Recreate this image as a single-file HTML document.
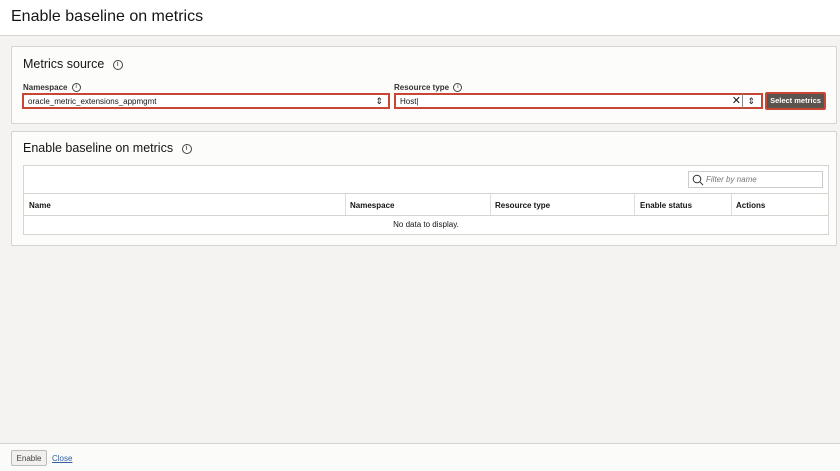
<!DOCTYPE html>
<html><head><style>
*{box-sizing:border-box;margin:0;padding:0}
body{width:840px;height:471px;background:#f4f3f1;font-family:"Liberation Sans",sans-serif;color:#161513;position:relative;overflow:hidden}
.a{position:absolute}
.hdr{left:0;top:0;width:840px;height:36px;background:#fff;border-bottom:1px solid #d6d4d1}
.panel{background:#fcfcfb;border:1px solid #d6d4d1;border-radius:2px}
.info{display:inline-block;width:10px;height:10px;border:1px solid #444;border-radius:50%;font-size:7px;line-height:8px;text-align:center;vertical-align:middle}
.lbl{font-size:8px;font-weight:bold;color:#333}
.inp{background:#fff;border:2px solid #c74634;height:16px;font-size:8px;padding-left:4px;line-height:13px}
.th{font-size:8px;font-weight:bold;top:201px}
.vl{width:1px;background:#ddd;top:194px;height:21px}
</style></head><body>
<div class="a hdr"><div class="a" style="left:11px;top:8px;font-size:16px">Enable baseline on metrics</div></div>

<div class="a panel" style="left:11px;top:46px;width:826px;height:78px"></div>
<div class="a" style="left:23px;top:57px;font-size:12.5px">Metrics source <span class="info" style="margin-left:5px">i</span></div>
<div class="a lbl" style="left:23px;top:83px">Namespace <span class="info" style="width:9px;height:9px;font-size:6px;line-height:7px;margin-left:2px;font-weight:normal">i</span></div>
<div class="a inp" style="left:22px;top:93px;width:368px">oracle_metric_extensions_appmgmt<span class="a" style="right:5px;top:0;font-size:9px">⇕</span></div>
<div class="a lbl" style="left:394px;top:83px">Resource type <span class="info" style="width:9px;height:9px;font-size:6px;line-height:7px;margin-left:2px;font-weight:normal">i</span></div>
<div class="a inp" style="left:394px;top:93px;width:369px">Host|<span class="a" style="right:20px;top:0;font-size:11px;line-height:12px">✕</span><span class="a" style="right:18px;top:-1px;width:1px;height:14px;background:#888"></span><span class="a" style="right:6px;top:0;font-size:9px">⇕</span></div>
<div class="a" style="left:765px;top:92px;width:61px;height:18px;background:#5b534d;border:2px solid #c74634;border-radius:2px;color:#fff;font-size:7.5px;font-weight:bold;text-align:center;line-height:14px">Select metrics</div>

<div class="a panel" style="left:11px;top:131px;width:826px;height:115px"></div>
<div class="a" style="left:23px;top:141px;font-size:12.5px">Enable baseline on metrics <span class="info" style="margin-left:5px">i</span></div>
<div class="a" style="left:23px;top:165px;width:806px;height:70px;border:1px solid #d6d4d1;background:#fff"></div>
<div class="a" style="left:688px;top:171px;width:135px;height:17px;border:1px solid #ccc;background:#fff;font-size:8px;font-style:italic;color:#777;padding-left:17px;line-height:15px">Filter by name
<svg class="a" style="left:3px;top:2px" width="12" height="12" viewBox="0 0 12 12"><circle cx="5" cy="5" r="3.8" fill="none" stroke="#333" stroke-width="1"/><path d="M8 8l3 3" stroke="#333"/></svg></div>
<div class="a" style="left:24px;top:193px;width:804px;height:1px;background:#d6d4d1"></div>
<div class="a" style="left:24px;top:215px;width:804px;height:1px;background:#d6d4d1"></div>
<div class="a vl" style="left:345px"></div><div class="a vl" style="left:490px"></div><div class="a vl" style="left:634px"></div><div class="a vl" style="left:731px"></div>
<div class="a th" style="left:29px">Name</div><div class="a th" style="left:350px">Namespace</div><div class="a th" style="left:495px">Resource type</div><div class="a th" style="left:640px">Enable status</div><div class="a th" style="left:736px">Actions</div>
<div class="a" style="left:24px;top:220px;width:804px;text-align:center;font-size:8px">No data to display.</div>

<div class="a" style="left:0;top:443px;width:840px;height:28px;background:#fbfbfa;border-top:1px solid #d6d4d1"></div>
<div class="a" style="left:11px;top:450px;width:36px;height:16px;border:1px solid #bbb;border-radius:2px;background:#f1f0ee;font-size:8px;text-align:center;line-height:15px;color:#444">Enable</div>
<div class="a" style="left:52px;top:454px;font-size:8px;color:#315fa0;text-decoration:underline">Close</div>
</body></html>
